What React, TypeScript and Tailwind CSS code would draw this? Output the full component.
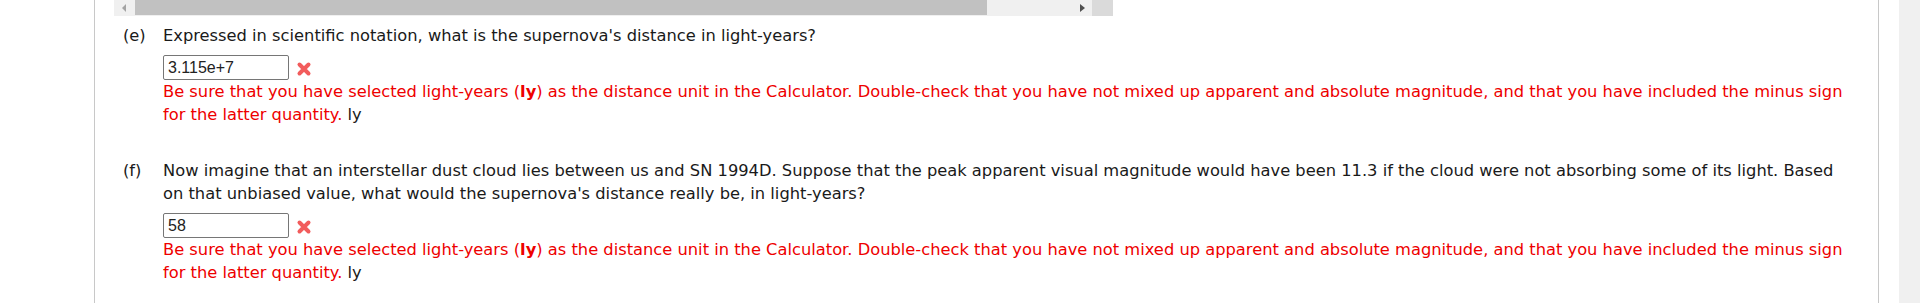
const RED_NOTE_HEAD =
  "Be sure that you have selected light-years (";
const RED_NOTE_TAIL =
  ") as the distance unit in the Calculator. Double-check that you have not mixed up apparent and absolute magnitude, and that you have included the minus sign for the latter quantity.";

const XIcon = () => (
  <svg width="16" height="16" viewBox="0 0 16 16" className="ml-[7px] mt-[6px] shrink-0">
    <path d="M3.5 3.5 L12.5 12.5 M12.5 3.5 L3.5 12.5" stroke="#f25c5c" strokeWidth="4" strokeLinecap="round" />
  </svg>
);

const Scrollbar = () => (
  <div className="flex h-4 w-[999px] bg-[#f0f0f0]">
    <div className="flex w-[21px] items-center justify-center">
      <svg width="5" height="8" viewBox="0 0 5 8">
        <path d="M4 0 L0 4 L4 8 Z" fill="#a3a3a3" />
      </svg>
    </div>
    <div className="h-[15px] w-[852px] bg-[#c1c1c1]" />
    <div className="flex flex-1 items-center justify-end pr-[7px]">
      <svg width="5" height="8" viewBox="0 0 5 8">
        <path d="M0 0 L5 4 L0 8 Z" fill="#505050" />
      </svg>
    </div>
    <div className="w-[21px] bg-[#dadada]" />
  </div>
);

type PartProps = {
  label: string;
  question: string;
  answer: string;
  className?: string;
};

const Part = ({ label, question, answer, className }: PartProps) => (
  <div className={`flex pl-[9px] ${className ?? ""}`}>
    <div className="w-10 shrink-0">{label}</div>
    <div className="w-[1690px]">
      <p>{question}</p>
      <div className="mt-2 flex items-start">
        <div className="h-[25px] w-[126px] rounded-[2px] border border-[#767676] px-1 font-['Liberation_Sans',sans-serif] text-[16px] leading-[23px] text-[#222]">
          {answer}
        </div>
        <XIcon />
      </div>
      <p className="text-[#ee0000]">
        {RED_NOTE_HEAD}
        <b>ly</b>
        {RED_NOTE_TAIL} <span className="text-[#1a1a1a]">ly</span>
      </p>
    </div>
  </div>
);

export default function App() {
  return (
    <div className="flex h-[303px] w-[1920px] overflow-hidden bg-white font-['DejaVu_Sans',sans-serif] text-[16.3px] leading-[23px] text-[#1a1a1a]">
      <div className="w-[94px] shrink-0" />
      <div className="w-[1785px] shrink-0 border-x border-[#c8c8c8] pl-[19px]">
        <Scrollbar />
        <Part
          className="mt-2"
          label="(e)"
          question="Expressed in scientific notation, what is the supernova's distance in light-years?"
          answer="3.115e+7"
        />
        <Part
          className="mt-[33px]"
          label="(f)"
          question="Now imagine that an interstellar dust cloud lies between us and SN 1994D. Suppose that the peak apparent visual magnitude would have been 11.3 if the cloud were not absorbing some of its light. Based on that unbiased value, what would the supernova's distance really be, in light-years?"
          answer="58"
        />
      </div>
      <div className="flex-1" />
      <div className="w-[21px] shrink-0 bg-[#f0f0f0]" />
    </div>
  );
}
